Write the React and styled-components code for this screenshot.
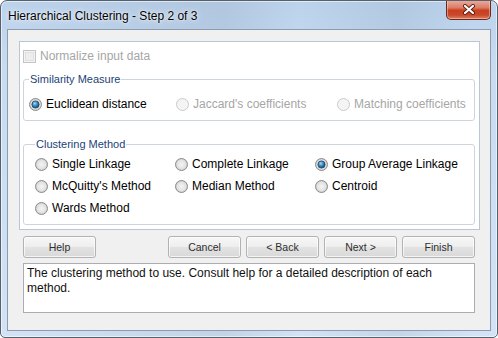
import React from 'react'
import styled, { createGlobalStyle } from 'styled-components';

const GlobalStyle = createGlobalStyle`
  html, body {
    margin: 0;
    padding: 0;
    background: #ffffff;
  }
  body {
    font-family: "Liberation Sans", Arial, sans-serif;
  }
`;

const Window = styled.div`
  width: 498px;
  height: 338px;
  box-sizing: border-box;
  display: flex;
  flex-direction: column;
  border: 1px solid #56616d;
  border-radius: 7px 7px 5px 5px;
  box-shadow: inset 0 0 0 1px rgba(255, 255, 255, 0.55);
  background:
    linear-gradient(90deg, rgba(120, 140, 165, 0) 0%, rgba(120, 140, 165, 0.18) 45%, rgba(120, 140, 165, 0) 60%, rgba(120, 140, 165, 0.16) 80%, rgba(120, 140, 165, 0) 95%),
    linear-gradient(180deg, #bcd3ec 0%, #c8dbf0 20%, #cddff3 60%, #d3e3f5 100%);
  overflow: hidden;
`;

const TitleBar = styled.div`
  height: 28px;
  display: flex;
  align-items: flex-start;
  padding-left: 7px;
`;

const Title = styled.div`
  margin-top: 8px;
  font-size: 12px;
  line-height: 14px;
  color: #000000;
  text-shadow: 0 0 6px rgba(255, 255, 255, 0.95), 0 0 2px rgba(255, 255, 255, 0.9);
`;

const CloseButton = styled.div`
  margin-left: auto;
  margin-right: 6px;
  margin-top: -1px;
  width: 45px;
  height: 20px;
  box-sizing: border-box;
  display: flex;
  align-items: center;
  justify-content: center;
  border: 1px solid #6b2a1f;
  border-top: none;
  border-radius: 0 0 5px 5px;
  background: linear-gradient(180deg, #eab0a2 0%, #dc7c66 40%, #c8401f 55%, #c8492a 80%, #de8466 100%);
  box-shadow: inset 0 0 0 1px rgba(255, 220, 210, 0.45);
`;

const Client = styled.div`
  flex: 1;
  margin: 0 6px 6px 6px;
  display: flex;
  flex-direction: column;
  padding: 11px 10px 0 11px;
  background: #f0f0f0;
  border: 1px solid #8a9cb0;
`;

const Panel = styled.div`
  display: flex;
  flex-direction: column;
  padding: 6px 4px 4px 3px;
  background: #ffffff;
  border: 1px solid #b7c7d7;
`;

const Option = styled.label`
  display: flex;
  align-items: center;
  gap: 4px;
  height: 16px;
  font-size: 12px;
  color: ${({ $disabled }) => ($disabled ? '#a6a6a6' : '#000000')};
  white-space: nowrap;
`;

const Group = styled.fieldset`
  margin: ${({ $top }) => $top}px 0 0 0;
  padding: 0;
  min-width: 0;
  border: 1px solid #cdd5dc;
  border-radius: 3px;
`;

const Legend = styled.legend`
  margin-left: ${({ $offset }) => $offset}px;
  padding: 0 1px;
  font-size: 11px;
  line-height: 13px;
  color: #1d3f78;
`;

const OptionGrid = styled.div`
  display: grid;
  grid-template-columns: ${({ $cols }) => $cols};
  row-gap: 6px;
  padding: ${({ $pad }) => $pad};
`;

const ButtonRow = styled.div`
  display: flex;
  gap: 5px;
  margin: 6px 5px 0 4px;
`;

const Spacer = styled.div`
  flex: 1;
`;

const WinButton = styled.div`
  width: 73px;
  height: 22px;
  box-sizing: border-box;
  display: flex;
  align-items: center;
  justify-content: center;
  border: 1px solid #b2b2b2;
  border-radius: 3px;
  background: linear-gradient(180deg, #f7f7f7 0%, #eeeeee 48%, #e2e2e2 52%, #d9d9d9 100%);
  box-shadow: inset 0 0 0 1px rgba(255, 255, 255, 0.7);
  font-size: 10.5px;
  color: #2e2e2e;
`;

const Description = styled.div`
  margin: 5px 5px 0 4px;
  height: 50px;
  box-sizing: border-box;
  padding: 2px 3px;
  background: #ffffff;
  border: 1px solid #abadb3;
  font-size: 12px;
  line-height: 15px;
  color: #111111;
`;

const Radio = ({ checked, disabled }) => (
  <svg width="13" height="13" viewBox="0 0 13 13">
    <defs>
      <radialGradient id="rfill" cx="0.5" cy="0.5" r="0.55">
        <stop offset="0" stopColor="#f4f4f4" />
        <stop offset="0.6" stopColor="#e4e4e4" />
        <stop offset="1" stopColor="#c4c4c4" />
      </radialGradient>
      <radialGradient id="rdot" cx="0.4" cy="0.35" r="0.7">
        <stop offset="0" stopColor="#a6e0fb" />
        <stop offset="0.45" stopColor="#3c8fc4" />
        <stop offset="1" stopColor="#14426a" />
      </radialGradient>
    </defs>
    {disabled ? (
      <circle cx="6.5" cy="6.5" r="6" fill="#f4f4f4" stroke="#cacaca" />
    ) : (
      <circle cx="6.5" cy="6.5" r="6" fill="url(#rfill)" stroke="#8d8d8d" />
    )}
    {checked && <circle cx="6.5" cy="6.5" r="3.6" fill="url(#rdot)" stroke="#1b4466" strokeWidth="0.8" />}
  </svg>
);

const Check = () => (
  <svg width="13" height="13" viewBox="0 0 13 13">
    <rect x="0.5" y="0.5" width="12" height="12" fill="#f4f4f4" stroke="#c4c4c4" />
    <rect x="2.5" y="2.5" width="8" height="8" fill="#ededed" stroke="#e0e0e0" />
  </svg>
);

const CloseGlyph = () => (
  <svg width="14" height="11" viewBox="0 0 14 11">
    <path d="M3 2 L11 9 M11 2 L3 9" stroke="#5a1e14" strokeWidth="4" strokeLinecap="round" />
    <path d="M3 2 L11 9 M11 2 L3 9" stroke="#ffffff" strokeWidth="2.2" strokeLinecap="round" />
  </svg>
);

const similarity = [
  { label: 'Euclidean distance', checked: true },
  { label: "Jaccard's coefficients", disabled: true },
  { label: 'Matching coefficients', disabled: true },
];

const methods = [
  { label: 'Single Linkage' },
  { label: 'Complete Linkage' },
  { label: 'Group Average Linkage', checked: true },
  { label: "McQuitty's Method" },
  { label: 'Median Method' },
  { label: 'Centroid' },
  { label: 'Wards Method' },
];

const App = () => {
  return (
    <>
      <GlobalStyle />
      <Window>
        <TitleBar>
          <Title>Hierarchical Clustering - Step 2 of 3</Title>
          <CloseButton>
            <CloseGlyph />
          </CloseButton>
        </TitleBar>
        <Client>
          <Panel>
            <Option $disabled>
              <Check />
              Normalize input data
            </Option>
            <Group $top={9}>
              <Legend $offset={5}>Similarity Measure</Legend>
              <OptionGrid $cols="147px 161px auto" $pad="10px 0 8px 5px">
                {similarity.map((o) => (
                  <Option key={o.label} $disabled={o.disabled}>
                    <Radio checked={o.checked} disabled={o.disabled} />
                    {o.label}
                  </Option>
                ))}
              </OptionGrid>
            </Group>
            <Group $top={17}>
              <Legend $offset={11}>Clustering Method</Legend>
              <OptionGrid $cols="140px 140px auto" $pad="5px 0 8px 11px">
                {methods.map((o) => (
                  <Option key={o.label}>
                    <Radio checked={o.checked} />
                    {o.label}
                  </Option>
                ))}
              </OptionGrid>
            </Group>
          </Panel>
          <ButtonRow>
            <WinButton>Help</WinButton>
            <Spacer />
            <WinButton>Cancel</WinButton>
            <WinButton>&lt; Back</WinButton>
            <WinButton>Next &gt;</WinButton>
            <WinButton>Finish</WinButton>
          </ButtonRow>
          <Description>
            The clustering method to use. Consult help for a detailed description of each method.
          </Description>
        </Client>
      </Window>
    </>
  )
}

export default App
